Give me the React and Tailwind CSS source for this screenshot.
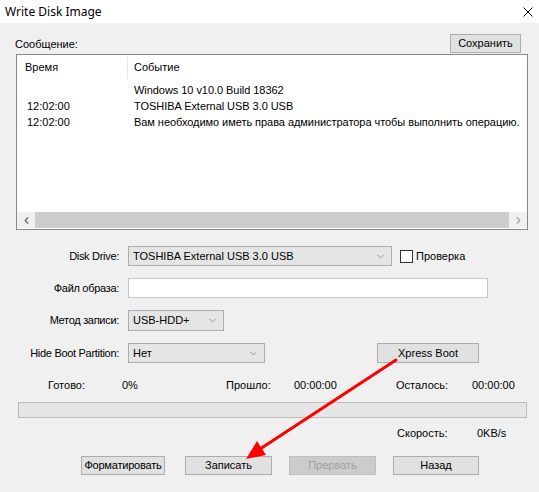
import { ChevronDown, ChevronLeft, ChevronRight } from "lucide-react";

const font = { fontFamily: '"Liberation Sans", Arial, sans-serif' };

function Btn({ children, className = "", disabled = false }) {
  return (
    <div
      className={`flex items-center justify-center border text-[11px] ${
        disabled
          ? "bg-[#cccccc] border-[#bfbfbf] text-[#a0a0a0]"
          : "bg-[#e1e1e1] border-[#adadad] text-black"
      } ${className}`}
    >
      {children}
    </div>
  );
}

function Select({ value, className = "" }) {
  return (
    <div
      className={`flex items-center justify-between bg-[#e5e5e5] border border-[#adadad] pl-[4px] pr-[5px] text-[11px] ${className}`}
    >
      <span>{value}</span>
      <ChevronDown size={11} strokeWidth={1.2} className="text-[#555]" />
    </div>
  );
}

function Label({ children }) {
  return (
    <div className="w-[120px] text-right text-[11px] pr-[1px] tracking-[-0.3px] whitespace-nowrap">
      {children}
    </div>
  );
}

const rows = [
  ["", "Windows 10 v10.0 Build 18362"],
  ["12:02:00", "TOSHIBA External USB 3.0 USB"],
  ["12:02:00", "Вам необходимо иметь права администратора чтобы выполнить операцию."],
];

export default function App() {
  return (
    <div className="relative w-[539px] h-[492px] bg-[#f0f0f0] overflow-hidden text-black" style={font}>
      {/* title bar */}
      <div className="h-[23px] bg-white flex items-center justify-between pl-[5px] pr-[6px]">
        <span className="text-[12px]" style={{ fontFamily: '"Noto Sans", "Liberation Sans", sans-serif' }}>
          Write Disk Image
        </span>
        <svg width="10" height="10" viewBox="0 0 10 10">
          <path d="M0.5 0.5 L9.5 9.5 M9.5 0.5 L0.5 9.5" stroke="#000" strokeWidth="1" />
        </svg>
      </div>

      {/* message header */}
      <div className="flex items-end justify-between pl-[15px] pr-[18px] mt-[11px]">
        <span className="text-[11px] mb-[1px]">Сообщение:</span>
        <Btn className="w-[71px] h-[19px]">Сохранить</Btn>
      </div>

      {/* list */}
      <div className="ml-[16px] mt-[1px] w-[512px] h-[176px] bg-white border border-[#828790] flex flex-col">
        <div className="h-[25px] flex items-center text-[11px]">
          <div className="w-[110px] pl-[8px]">Время</div>
          <div className="w-px h-[22px] bg-[#e5e5e5] self-start mt-[2px]" />
          <div className="pl-[6px]">Событие</div>
        </div>
        <div className="flex-1 pt-[2px]">
          {rows.map(([t, e], i) => (
            <div key={i} className="h-[16px] flex items-center text-[11px]">
              <div className="w-[111px] pl-[10px]">{t}</div>
              <div className="pl-[6px] whitespace-nowrap tracking-[-0.05px]">{e}</div>
            </div>
          ))}
        </div>
        <div className="h-[16px] mb-[1px] flex items-center bg-[#f0f0f0]">
          <div className="w-[18px] h-full flex items-center justify-center">
            <ChevronLeft size={11} strokeWidth={2.5} className="text-[#606060]" />
          </div>
          <div className="flex-1 h-full bg-[#cdcdcd]" />
          <div className="w-[18px] h-full flex items-center justify-center">
            <ChevronRight size={11} strokeWidth={2.5} className="text-[#a0a0a0]" />
          </div>
        </div>
      </div>

      {/* form */}
      <div className="flex items-center gap-[8px] mt-[16px] h-[20px]">
        <Label>Disk Drive:</Label>
        <Select value="TOSHIBA External USB 3.0 USB" className="w-[264px] h-[20px]" />
        <div className="flex items-center gap-[3px] text-[11px]">
          <div className="w-[13px] h-[13px] border border-[#333] bg-white" />
          <span>Проверка</span>
        </div>
      </div>

      <div className="flex items-center gap-[8px] mt-[12px] h-[20px]">
        <Label>Файл образа:</Label>
        <div className="w-[360px] h-[20px] bg-white border border-[#c8c8c8]" />
      </div>

      <div className="flex items-center gap-[8px] mt-[12px] h-[21px]">
        <Label>Метод записи:</Label>
        <Select value="USB-HDD+" className="w-[96px] h-[21px]" />
      </div>

      <div className="flex items-center gap-[8px] mt-[12px] h-[20px]">
        <Label>Hide Boot Partition:</Label>
        <Select value="Нет" className="w-[137px] h-[20px]" />
        <Btn className="ml-[104px] w-[102px] h-[20px]">Xpress Boot</Btn>
      </div>

      {/* status */}
      <div className="flex items-center h-[14px] mt-[15px] pl-[48px] text-[11px]">
        <span className="w-[74px]">Готово:</span>
        <span className="w-[104px]">0%</span>
        <span className="w-[68px]">Прошло:</span>
        <span className="w-[102px]">00:00:00</span>
        <span className="w-[76px]">Осталось:</span>
        <span>00:00:00</span>
      </div>

      <div className="ml-[18px] mt-[10px] w-[509px] h-[16px] bg-[#e6e6e6] border border-[#bcbcbc]" />

      <div className="flex items-center h-[14px] mt-[8px] pl-[397px] text-[11px]">
        <span className="w-[80px]">Скорость:</span>
        <span>0KB/s</span>
      </div>

      {/* buttons */}
      <div className="flex items-center mt-[16px] pl-[81px] h-[19px]">
        <Btn className="w-[84px] h-[19px] tracking-[-0.2px]">Форматировать</Btn>
        <Btn className="ml-[20px] w-[87px] h-[19px]">Записать</Btn>
        <Btn disabled className="ml-[17px] w-[87px] h-[19px]">Прервать</Btn>
        <Btn className="ml-[17px] w-[86px] h-[19px]">Назад</Btn>
      </div>

      {/* red annotation arrow */}
      <svg className="absolute left-0 top-0 pointer-events-none" width="539" height="492" viewBox="0 0 539 492">
        <line x1="396" y1="360" x2="260" y2="449" stroke="#ff0000" strokeWidth="3" strokeLinecap="round" />
        <polygon points="246,459 257,441 266,455" fill="#ff0000" />
      </svg>
    </div>
  );
}
